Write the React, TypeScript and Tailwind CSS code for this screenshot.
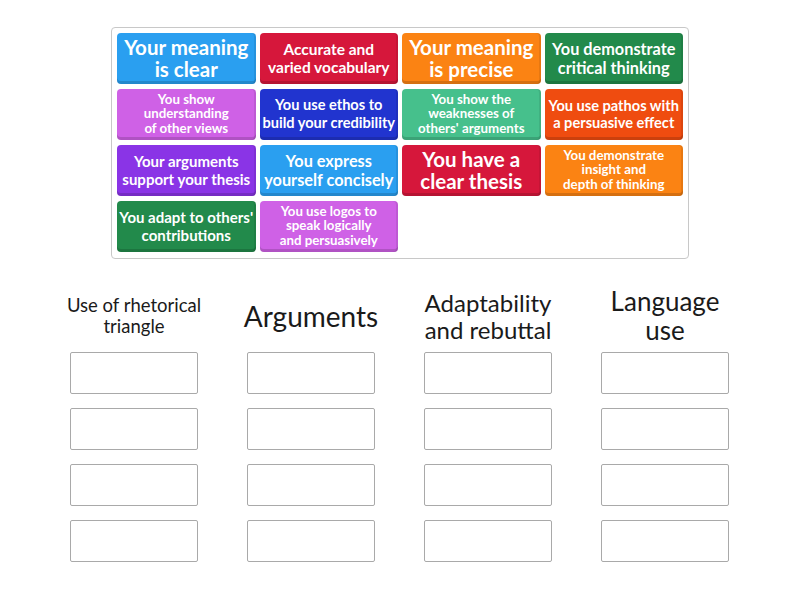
import React from "react";

type Tile = { text: string[]; bg: string; size: string };

const tiles: Tile[] = [
  { text: ["Your meaning", "is clear"], bg: "bg-[#2a9ff0]", size: "text-[20.5px] leading-[22px]" },
  { text: ["Accurate and", "varied vocabulary"], bg: "bg-[#d6173b]", size: "text-[15.5px] leading-[18px]" },
  { text: ["Your meaning", "is precise"], bg: "bg-[#fb8313]", size: "text-[20.5px] leading-[22px]" },
  { text: ["You demonstrate", "critical thinking"], bg: "bg-[#228a4b]", size: "text-[16.3px] leading-[19px]" },
  { text: ["You show", "understanding", "of other views"], bg: "bg-[#cf61e6]", size: "text-[13.3px] leading-[14.5px]" },
  { text: ["You use ethos to", "build your credibility"], bg: "bg-[#2134cf]", size: "text-[14.6px] leading-[18px]" },
  { text: ["You show the", "weaknesses of", "others' arguments"], bg: "bg-[#46c08c]", size: "text-[13.3px] leading-[14.5px]" },
  { text: ["You use pathos with", "a persuasive effect"], bg: "bg-[#ef4c10]", size: "text-[14.6px] leading-[17px]" },
  { text: ["Your arguments", "support your thesis"], bg: "bg-[#8a34e6]", size: "text-[15px] leading-[18px]" },
  { text: ["You express", "yourself concisely"], bg: "bg-[#2a9ff0]", size: "text-[16.3px] leading-[19px]" },
  { text: ["You have a", "clear thesis"], bg: "bg-[#d6173b]", size: "text-[20.5px] leading-[22px]" },
  { text: ["You demonstrate", "insight and", "depth of thinking"], bg: "bg-[#fb8313]", size: "text-[13.3px] leading-[14.5px]" },
  { text: ["You adapt to others'", "contributions"], bg: "bg-[#228a4b]", size: "text-[15px] leading-[18px]" },
  { text: ["You use logos to", "speak logically", "and persuasively"], bg: "bg-[#cf61e6]", size: "text-[13.3px] leading-[14.5px]" },
];

const headings = [
  { lines: ["Use of rhetorical", "triangle"], size: "text-[18.5px] leading-[21px]" },
  { lines: ["Arguments"], size: "text-[28px] leading-[32px]" },
  { lines: ["Adaptability", "and rebuttal"], size: "text-[24px] leading-[27px]" },
  { lines: ["Language", "use"], size: "text-[26px] leading-[29px]" },
];

export default function App() {
  return (
    <div className="w-[800px] h-[600px] bg-white font-['Lato',_'Open_Sans',_sans-serif]">
      <div className="w-[578px] mx-auto pt-[27px]">
        <div className="border border-[#c8c8c8] rounded-[4px] p-[5px] pb-[6px] grid grid-cols-4 gap-x-[4px] gap-y-[5px]">
          {tiles.map((t, i) => (
            <div
              key={i}
              className={`${t.bg} ${t.size} h-[51px] rounded-[4px] flex flex-col items-center justify-center text-white font-bold text-center shadow-[inset_0_-3px_0_rgba(0,0,0,0.15),inset_-2px_0_0_rgba(0,0,0,0.08)] pb-[2px]`}
            >
              {t.text.map((l, j) => (
                <span key={j} className="block whitespace-nowrap">{l}</span>
              ))}
            </div>
          ))}
        </div>
      </div>

      <div className="w-[659px] ml-[70px] mt-[27px] grid grid-cols-4 gap-x-[49px]">
        {headings.map((h, i) => (
          <div key={i} className={`${h.size} h-[60px] flex flex-col items-center justify-center text-[#1a1a1a] font-normal text-center -mx-6`}>
            {h.lines.map((l, j) => (
              <span key={j} className="block whitespace-nowrap">{l}</span>
            ))}
          </div>
        ))}
        {headings.map((_, i) => (
          <div key={i} className="flex flex-col gap-[14px] mt-[6px]">
            {[0, 1, 2, 3].map((r) => (
              <div key={r} className="h-[42px] border border-[#a9a9a9] rounded-[2px] bg-white" />
            ))}
          </div>
        ))}
      </div>
    </div>
  );
}
